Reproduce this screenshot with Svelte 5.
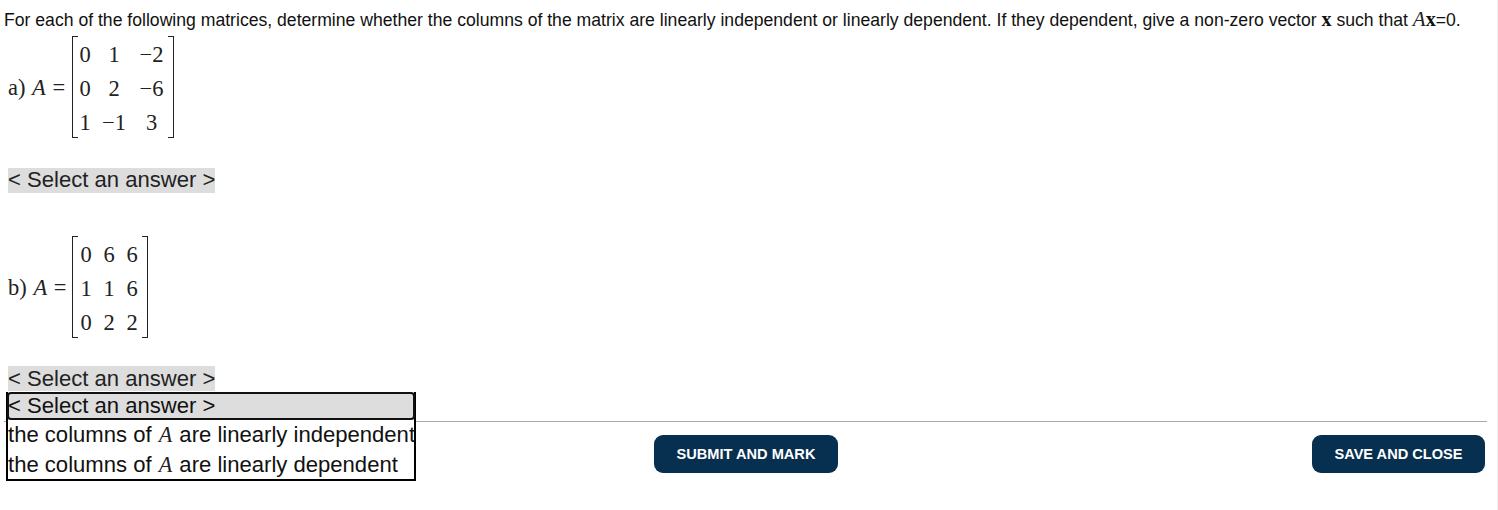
<script>
  const partA = [["0","1","−2"],["0","2","−6"],["1","−1","3"]];
  const partB = [["0","6","6"],["1","1","6"],["0","2","2"]];
</script>

{#snippet matrix(label, rows, cls)}
  <div class="formula">
    <span class="label">{label} <i>A</i> =</span>
    <div class="matrix {cls}">
      {#each rows as row}
        {#each row as cell}
          <span class="cell">{cell}</span>
        {/each}
      {/each}
    </div>
  </div>
{/snippet}

<div class="page">
  <p class="question">For each of the following matrices, determine whether the columns of the matrix are linearly independent or linearly dependent. If they dependent, give a non-zero vector <b class="vec">x</b> such that <i class="mi">A</i><b class="vec">x</b>=0.</p>

  {@render matrix("a)", partA, "wide")}
  <div class="answer first"><span class="select">&lt; Select an answer &gt;</span></div>

  {@render matrix("b)", partB, "narrow")}
  <div class="answer second"><span class="select">&lt; Select an answer &gt;</span></div>

  <div class="menu">
    <div class="option current">&lt; Select an answer &gt;</div>
    <div class="option">the columns of <i class="mi wideA">A</i> are linearly independent</div>
    <div class="option">the columns of <i class="mi wideA">A</i> are linearly dependent</div>
  </div>

  <footer>
    <button class="submit">SUBMIT AND MARK</button>
    <button class="save">SAVE AND CLOSE</button>
  </footer>
</div>

<style>
  :global(body) {
    margin: 0;
    background: #fff;
    color: #000;
    font-family: "Liberation Sans", Arial, sans-serif;
  }
  .page {
    position: relative;
    width: 1498px;
    height: 510px;
    overflow: hidden;
    box-sizing: border-box;
    border-right: 1px solid #f0f0f0;
  }
  .question {
    margin: 0;
    padding: 10px 0 0 4px;
    height: 18px;
    font-size: 17.62px;
    line-height: 18px;
    white-space: nowrap;
    color: #111;
  }
  .question .mi {
    font-size: 21px;
  }
  .vec {
    font-family: "Liberation Serif", serif;
    font-weight: bold;
    font-size: 20px;
  }
  .mi {
    font-family: "Liberation Serif", serif;
    font-style: italic;
    color: #222;
  }
  .wideA {
    margin: 0 1px;
  }
  .formula {
    display: flex;
    align-items: center;
    height: 102px;
    margin-top: 8px;
    padding-left: 8px;
    font-family: "Liberation Serif", serif;
    font-size: 22.5px;
    color: #222;
  }
  .label {
    white-space: pre;
    width: 64px;
    padding-top: 2px;
    word-spacing: 1px;
  }
  .matrix {
    display: grid;
    grid-auto-rows: 34px;
    align-items: center;
    justify-items: center;
    height: 102px;
    box-sizing: border-box;
    position: relative;
    padding-top: 2px;
  }
  .matrix::before,
  .matrix::after {
    content: "";
    position: absolute;
    top: 0;
    bottom: 0;
    width: 5px;
    border: 1.5px solid #222;
  }
  .matrix::before { left: 0; border-right: 0; }
  .matrix::after { right: 0; border-left: 0; }
  .wide { grid-template-columns: 24px 34px 41px; width: 102px; padding-left: 1px; }
  .narrow { grid-template-columns: 23px 23px 23px; width: 76px; padding-left: 2.5px; }
  .answer {
    padding-left: 8px;
    font-size: 22.08px;
    line-height: 24px;
  }
  .first { margin-top: 30px; }
  .second { margin-top: 28px; }
  .select {
    display: inline-block;
    background: #ddd;
    color: #222;
    white-space: nowrap;
    padding-bottom: 1px;
  }
  .second .select {
    padding: 1px 0 0;
  }
  .first + .formula { margin-top: 43px; }
  .menu {
    position: absolute;
    left: 6px;
    top: 392px;
    width: 410px;
    height: 89px;
    box-sizing: border-box;
    background: #fff;
    border: 2px solid #000;
    border-top: 0;
    z-index: 2;
    font-size: 22.08px;
    white-space: nowrap;
    color: #111;
  }
  .option {
    height: 30px;
    line-height: 30px;
  }
  .current {
    height: 28px;
    line-height: 24px;
    box-sizing: border-box;
    margin: 0 -1px;
    background: #ddd;
    border: 2px solid #111;
    border-radius: 4px;
    text-indent: -1px;
  }
  footer {
    position: absolute;
    left: 4px;
    top: 421px;
    width: 1483px;
    border-top: 1px solid #aaa;
    padding-top: 13px;
    display: flex;
  }
  button {
    height: 38px;
    border: 0;
    border-radius: 9px;
    background: #072f4f;
    color: #fff;
    font-family: "Liberation Sans", Arial, sans-serif;
    font-size: 14.6px;
    font-weight: bold;
    padding: 0 0 1px;
  }
  .submit { width: 184px; margin-left: 650px; }
  .save { width: 173px; margin-left: auto; margin-right: 2px; }
</style>
